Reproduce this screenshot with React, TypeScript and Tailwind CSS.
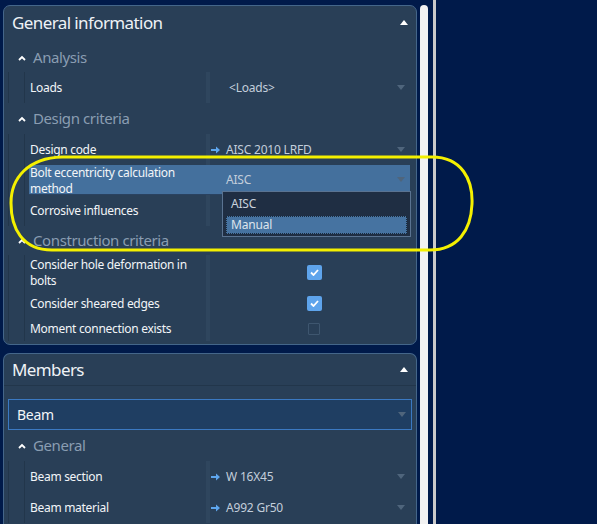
import React from 'react';

const font = { fontFamily: '"Noto Sans", "Open Sans", sans-serif' };

const Caret = () => (
  <svg width="8" height="5" viewBox="0 0 8 5" className="shrink-0">
    <path d="M0 5 L4 0 L8 5 Z" fill="#ffffff" />
  </svg>
);

const DropArrow = () => (
  <svg width="8" height="5" viewBox="0 0 8 5" className="shrink-0">
    <path d="M0 0 L8 0 L4 5 Z" fill="#4f657c" />
  </svg>
);

const LinkArrow = () => (
  <svg width="9" height="8" viewBox="0 0 9 8" className="shrink-0">
    <path d="M0 3 H5 V0.5 L9 4 L5 7.5 V5 H0 Z" fill="#5ea6ee" />
  </svg>
);

const Chevron = () => (
  <svg width="8" height="6" viewBox="0 0 8 6" className="shrink-0">
    <path d="M1 5 L4 2 L7 5" stroke="#ffffff" strokeWidth="1.8" fill="none" />
  </svg>
);

const Section = ({ title, h = 'h-[31px]' }: { title: string; h?: string }) => (
  <div className={`${h} flex items-center pl-[14px]`}>
    <Chevron />
    <span className="ml-[7px] text-[15px] tracking-[-0.4px] text-[#8a9db2] leading-none">{title}</span>
  </div>
);

const Checkbox = ({ checked }: { checked: boolean }) =>
  checked ? (
    <div className="w-[15px] h-[15px] rounded-[2px] bg-[#5ea4ec] flex items-center justify-center">
      <svg width="9" height="7" viewBox="0 0 9 7">
        <path d="M1 3.5 L3.5 6 L8 1" stroke="#ffffff" strokeWidth="1.8" fill="none" />
      </svg>
    </div>
  ) : (
    <div className="w-[12px] h-[12px] rounded-[1px] border border-[#3e566f]" />
  );

type Row = {
  label: React.ReactNode;
  h: string;
  value?: React.ReactNode;
  highlight?: boolean;
  drop?: boolean;
};

const Group = ({ rows }: { rows: Row[] }) => (
  <div className="flex ml-[4px]">
    <div className="w-px bg-[#22364b]" />
    <div className="w-[15px]" />
    <div className="w-px bg-[#22364b]" />
    <div className="flex-1 pl-[4px] pr-[6px] flex flex-col">
      {rows.map((r, i) => (
        <div
          key={i}
          className={`${r.h} flex ${r.highlight ? 'bg-[#44709d] border-b border-[#2a4260]' : ''}`}
        >
          <div className="w-[177px] pl-[1px] flex items-center text-[12px] tracking-[-0.3px] leading-[16px] text-[#f2f5f8]">
            {r.label}
          </div>
          <div className={`w-[4px] ${r.highlight ? '' : 'bg-[#2f465e]'}`} />
          <div className="flex-1 flex items-center">
            {r.value}
            {r.drop && (
              <div className="ml-auto mr-[5px]">
                <DropArrow />
              </div>
            )}
          </div>
        </div>
      ))}
    </div>
  </div>
);

const Value = ({ text, link, pl = 'pl-[1px]' }: { text: string; link?: boolean; pl?: string }) => (
  <div className={`flex items-center gap-[6px] ${pl} text-[12px] tracking-[-0.2px] text-[#c3cedb]`}>
    {link && <LinkArrow />}
    <span>{text}</span>
  </div>
);

const Check = ({ checked }: { checked: boolean }) => (
  <div className="w-full flex justify-center pl-[8px]">
    <Checkbox checked={checked} />
  </div>
);

export default function App() {
  return (
    <div className="relative w-[597px] h-[524px] bg-[#001a4a] overflow-hidden flex" style={font}>
      {/* Panels column */}
      <div className="w-[417px] shrink-0 pl-[3px] pt-[5px] flex flex-col gap-[8px]">
        {/* General information */}
        <div className="h-[340px] shrink-0 rounded-[7px] border border-[#44668a] bg-[#293f57] flex flex-col">
          <div className="h-[33px] flex items-center justify-between pl-[8px] pr-[8px]">
            <span className="text-[17px] tracking-[-0.6px] text-[#eef2f6] leading-none">General information</span>
            <Caret />
          </div>
          <div className="h-[4px]" />
          <Section title="Analysis" h="h-[29px]" />
          <Group
            rows={[{ label: 'Loads', h: 'h-[31px]', value: <Value text="<Loads>" pl="pl-[19px]" />, drop: true }]}
          />
          <Section title="Design criteria" />
          <Group
            rows={[
              { label: 'Design code', h: 'h-[31px]', value: <Value text="AISC 2010 LRFD" link />, drop: true },
              {
                label: (
                  <span className="pt-[3px]">
                    Bolt eccentricity calculation
                    <br />
                    method
                  </span>
                ),
                h: 'h-[30px]',
                highlight: true,
                value: <Value text="AISC" pl="pl-[16px]" />,
                drop: true,
              },
              { label: 'Corrosive influences', h: 'h-[31px]' },
            ]}
          />
          <Section title="Construction criteria" h="h-[29px]" />
          <Group
            rows={[
              {
                label: (
                  <span>
                    Consider hole deformation in
                    <br />
                    bolts
                  </span>
                ),
                h: 'h-[35px]',
                value: <Check checked />,
              },
              { label: 'Consider sheared edges', h: 'h-[27px]', value: <Check checked /> },
              { label: 'Moment connection exists', h: 'h-[24px]', value: <Check checked={false} /> },
            ]}
          />
        </div>

        {/* Members */}
        <div className="flex-1 rounded-t-[7px] border border-b-0 border-[#44668a] bg-[#293f57] flex flex-col">
          <div className="h-[32px] flex items-center justify-between pl-[8px] pr-[8px] border-b border-[#22364b]">
            <span className="text-[17px] tracking-[-0.6px] text-[#eef2f6] leading-none">Members</span>
            <Caret />
          </div>
          <div className="mx-[4px] mt-[13px] h-[31px] border border-[#3b79c2] bg-[#1f3e62] flex items-center pl-[8px] pr-[5px]">
            <span className="text-[14px] tracking-[-0.3px] text-[#f2f5f8]">Beam</span>
            <div className="ml-auto">
              <DropArrow />
            </div>
          </div>
          <Section title="General" />
          <Group
            rows={[
              { label: 'Beam section', h: 'h-[31px]', value: <Value text="W 16X45" link />, drop: true },
              { label: 'Beam material', h: 'h-[31px]', value: <Value text="A992 Gr50" link />, drop: true },
            ]}
          />
        </div>
      </div>

      {/* Scrollbar */}
      <div className="ml-[3px] mt-[5px] w-[8px] bg-[#f2f2f2] rounded-t-[4px]" />
      <div className="ml-[5px] w-[3px] bg-[#cacaca]" />

      {/* Open dropdown list */}
      <div className="absolute left-[222px] top-[191px] w-[189px] h-[46px] bg-[#1f2e43] border border-[#5a7391] text-[12px] tracking-[-0.2px]">
        <div className="h-[24px] flex items-center pl-[8px] text-[#c9d2dc]">AISC</div>
        <div className="mx-[3px] h-[18px] bg-[#4673a1] border border-dotted border-[#1a2a3c] flex items-center pl-[4px] text-[#dde4ec]">
          Manual
        </div>
      </div>

      {/* Yellow annotation */}
      <svg className="absolute left-0 top-0 pointer-events-none" width="597" height="524">
        <path
          d="M 62 157 L 432 157 C 462 157, 473 180, 472 204 C 471 230, 458 250, 430 250 L 52 250 C 22 250, 11 228, 11 203 C 11 178, 28 158, 62 157 Z"
          stroke="#f4f000"
          strokeWidth="3"
          fill="none"
        />
      </svg>
    </div>
  );
}
